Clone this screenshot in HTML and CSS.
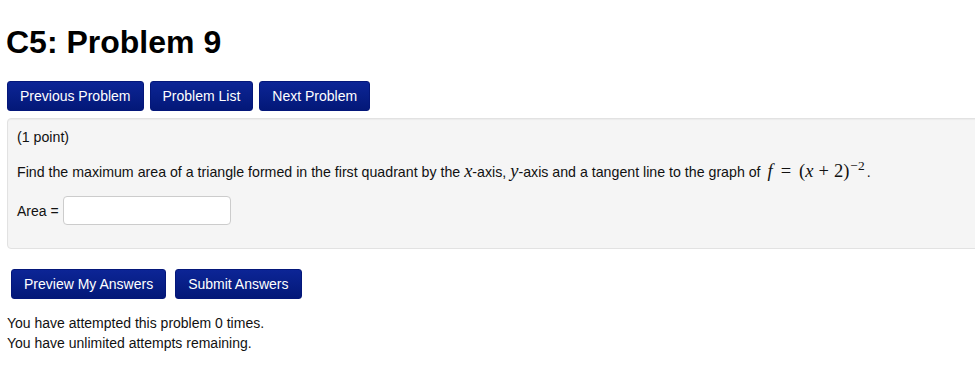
FILE: index.html
```html
<!DOCTYPE html>
<html lang="en">
<head>
<meta charset="utf-8">
<title>C5: Problem 9</title>
<link rel="stylesheet" href="styles.css">
</head>
<body>
<div class="page">
  <h1 class="title">C5: Problem 9</h1>
  <div class="nav">
    <button class="btn">Previous Problem</button>
    <button class="btn">Problem List</button>
    <button class="btn">Next Problem</button>
  </div>
  <div class="well">
    <p class="line">(1 point)</p>
    <p class="line">Find the maximum area of a triangle formed in the first quadrant by the <span class="mi">x</span>-axis, <span class="mi">y</span>-axis and a tangent line to the graph of <span class="math"><span class="mi">f</span><span class="rel">=</span>(<span class="mi">x</span><span class="bin">+</span>2)<sup class="sup">−2</sup></span>.</p>
    <div class="answer">
      <label class="label" for="ans">Area =</label>
      <input id="ans" class="input" type="text">
    </div>
  </div>
  <div class="submit">
    <button class="btn">Preview My Answers</button>
    <button class="btn">Submit Answers</button>
  </div>
  <div class="status">
    <div>You have attempted this problem 0 times.</div>
    <div>You have unlimited attempts remaining.</div>
  </div>
</div>
</body>
</html>
```
FILE: styles.css
```css
html, body {
  margin: 0;
  padding: 0;
  overflow: hidden;
  background: #fff;
}
body {
  font-family: "Liberation Sans", Arial, sans-serif;
  font-size: 14px;
  line-height: 20px;
  color: #111;
}
.page {
  padding-left: 7px;
}
.title {
  margin: 24px 0 0 -1px;
  font-size: 32px;
  line-height: 36px;
  font-weight: bold;
  color: #000;
}
.nav {
  display: flex;
  gap: 6px;
  margin-top: 21px;
}
.btn {
  font-family: "Liberation Sans", Arial, sans-serif;
  font-size: 14px;
  line-height: 20px;
  color: #fff;
  padding: 4px 12px;
  border: 1px solid #04177a;
  border-radius: 3px;
  background: linear-gradient(#0c2596, #031878);
  cursor: pointer;
}
.well {
  margin-top: 7px;
  width: 1000px;
  background: #f5f5f5;
  border: 1px solid #e2e2e2;
  border-radius: 4px;
  padding: 8px 9px 23px;
  box-shadow: inset 0 1px 1px rgba(0,0,0,0.04);
}
.line {
  margin: 0 0 15px;
  height: 20px;
  font-size: 14.2px;
}
.mi {
  font-family: "Liberation Serif", "Times New Roman", serif;
  font-style: italic;
  font-size: 18.5px;
  line-height: 1;
}
.math {
  font-family: "Liberation Serif", "Times New Roman", serif;
  font-size: 18.5px;
  line-height: 1;
  margin-left: 3px;
}
.rel {
  margin: 0 8px;
}
.bin {
  margin: 0 5px;
}
.sup {
  font-size: 13.5px;
  line-height: 0;
  vertical-align: 7px;
  margin: 0 2px 0 1px;
}
.answer {
  display: flex;
  align-items: center;
  gap: 4px;
  margin-top: -1px;
}
.input {
  width: 168px;
  height: 29px;
  box-sizing: border-box;
  border: 1px solid #ccc;
  border-radius: 4px;
  background: #fff;
  margin: 0;
}
.submit {
  display: flex;
  gap: 9px;
  margin: 20px 0 0 4px;
}
.status {
  margin-top: 14px;
}
```
